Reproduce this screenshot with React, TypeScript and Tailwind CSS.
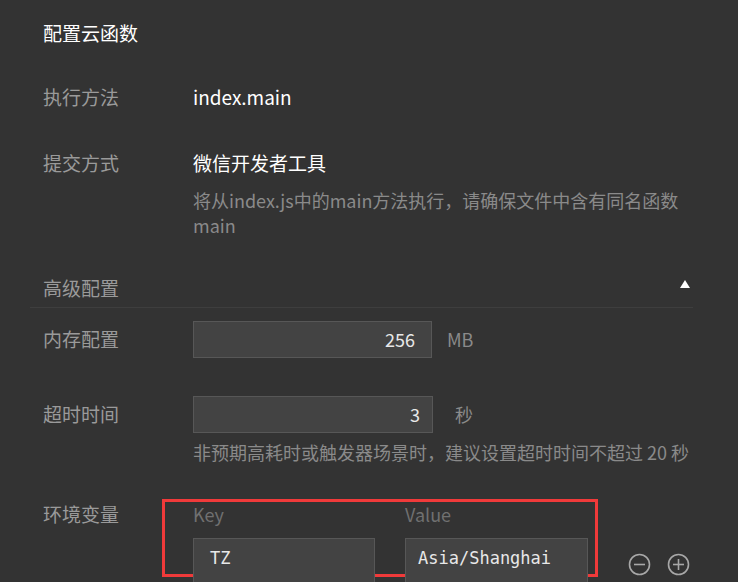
import React from "react";

const font = { fontFamily: '"Noto Sans CJK SC", "Noto Sans", sans-serif' };

function Label({ children }: { children: React.ReactNode }) {
  return <div className="w-[150px] shrink-0 text-[19px] text-[#9a9a9a]">{children}</div>;
}

function CircleIcon({ plus }: { plus?: boolean }) {
  return (
    <svg width="23" height="23" viewBox="0 0 23 23" fill="none" stroke="#a8a8a8" strokeWidth="1.6">
      <circle cx="11.5" cy="11.5" r="10" />
      <path d="M6 11.5h11" />
      {plus && <path d="M11.5 6v11" />}
    </svg>
  );
}

export default function App() {
  return (
    <div className="w-[738px] h-[582px] overflow-hidden bg-[#333333] pl-[43px]" style={font}>
      <div className="h-[66px] flex items-center text-[19px] text-white">配置云函数</div>

      <div className="flex items-center h-[62px]">
        <Label>执行方法</Label>
        <div className="text-[19px] text-white">index.main</div>
      </div>

      <div className="flex mt-[21px]">
        <Label>
          <div className="h-[28px] leading-[28px]">提交方式</div>
        </Label>
        <div className="w-[500px]">
          <div className="h-[28px] leading-[28px] text-[19px] text-white">微信开发者工具</div>
          <div className="mt-[11px] text-[18px] leading-[25px] text-[#8a8a8a]">
            将从index.js中的main方法执行，请确保文件中含有同名函数main
          </div>
        </div>
      </div>

      <div className="mt-[36px] w-[663px] -ml-[13px] pl-[13px] pr-[3px] h-[34px] border-b border-[#3e3e3e] flex items-start justify-between">
        <div className="text-[19px] text-[#9a9a9a] leading-[28px]">高级配置</div>
        <svg width="10" height="8" viewBox="0 0 10 8" className="mt-[6px]">
          <path d="M5 0L10 8H0Z" fill="#ffffff" />
        </svg>
      </div>

      <div className="flex items-center mt-[13px]">
        <Label>内存配置</Label>
        <div className="w-[239px] h-[37px] bg-[#434343] border border-[#575757] flex items-center justify-end pr-[16px] text-[18px] text-[#e8e8e8]">
          256
        </div>
        <div className="ml-[15px] text-[18px] text-[#8a8a8a]">MB</div>
      </div>

      <div className="flex items-center mt-[38px]">
        <Label>超时时间</Label>
        <div className="w-[240px] h-[37px] bg-[#434343] border border-[#575757] flex items-center justify-end pr-[12px] text-[18px] text-[#e8e8e8]">
          3
        </div>
        <div className="ml-[22px] text-[18px] text-[#8a8a8a]">秒</div>
      </div>
      <div className="ml-[150px] mt-[7px] text-[18px] leading-[25px] text-[#8a8a8a] whitespace-nowrap">
        非预期高耗时或触发器场景时，建议设置超时时间不超过 20 秒
      </div>

      <div className="flex mt-[34px]">
        <div className="w-[119px] shrink-0 pt-[1px] text-[19px] text-[#9a9a9a] leading-[28px]">环境变量</div>
        <div className="w-[436px] h-[78px] border-[3px] border-[#f03a3a] pl-[28px] flex gap-[30px]">
          <div className="w-[182px]">
            <div className="h-[24px] leading-[24px] text-[18px] text-[#707070]">Key</div>
            <div
              className="mt-[12px] h-[45px] bg-[#434343] border border-[#575757] pl-[16px] pt-[7px] text-[17px] text-[#e8e8e8]"
              style={{ fontFamily: '"DejaVu Sans Mono", monospace' }}
            >
              TZ
            </div>
          </div>
          <div className="w-[183px]">
            <div className="h-[24px] leading-[24px] text-[18px] text-[#707070]">Value</div>
            <div
              className="mt-[12px] h-[45px] bg-[#434343] border border-[#575757] pl-[12px] pt-[7px] text-[17px] text-[#e8e8e8]"
              style={{ fontFamily: '"DejaVu Sans Mono", monospace' }}
            >
              Asia/Shanghai
            </div>
          </div>
        </div>
        <div className="flex gap-[16px] ml-[30px] mt-[54px]">
          <CircleIcon />
          <CircleIcon plus />
        </div>
      </div>
    </div>
  );
}
